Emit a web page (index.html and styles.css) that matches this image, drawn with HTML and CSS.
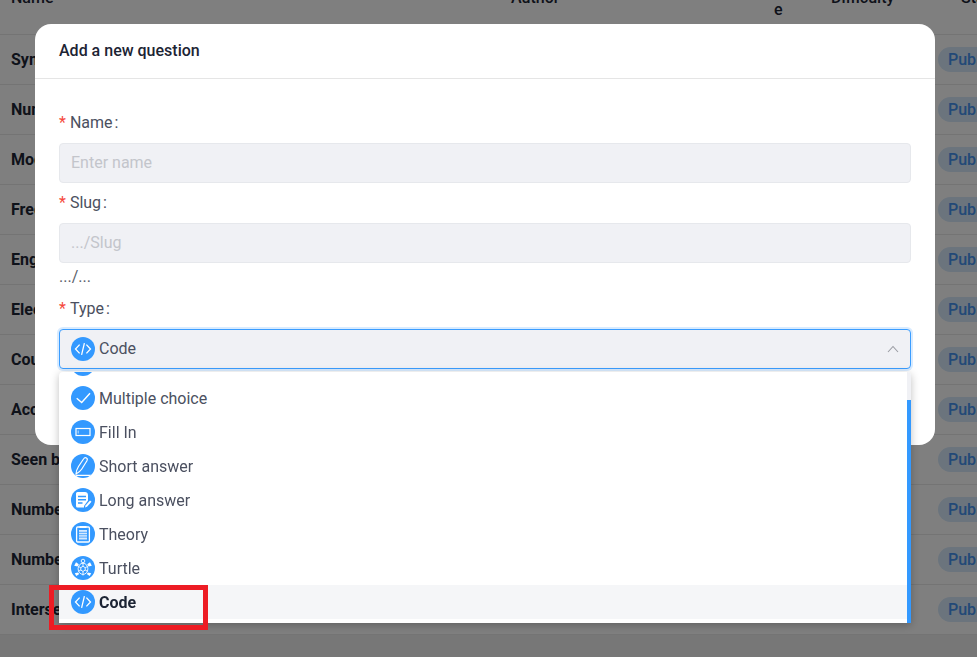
FILE: index.html
```html
<!DOCTYPE html>
<html lang="en">
<head>
<meta charset="utf-8">
<title>Add a new question</title>
<link rel="stylesheet" href="styles.css">
</head>
<body>
<svg class="defs" width="0" height="0" aria-hidden="true">
  <defs>
    <symbol id="i-code" viewBox="0 0 24 24">
      <path d="M8.600 7.600 4.500 12l4.100 4.400M15.400 7.600 19.500 12l-4.100 4.400M13.400 6.200l-2.800 11.600" fill="none" stroke="#fff" stroke-width="1.300"/>
    </symbol>
    <symbol id="i-check" viewBox="0 0 24 24">
      <path d="M5.700 12.300l5 4.200L19 7.300" fill="none" stroke="#fff" stroke-width="1.400"/>
    </symbol>
    <symbol id="i-fill" viewBox="0 0 24 24">
      <rect x="5" y="8.500" width="14" height="7" fill="none" stroke="#fff" stroke-width="1.200"/>
      <path d="M7.200 10.500v3" stroke="#fff" stroke-opacity=".7" stroke-width="1"/>
    </symbol>
    <symbol id="i-short" viewBox="0 0 24 24">
      <path d="M5 20c0-3 1-5 2.500-7.500L12.500 5c.8-1.300 2-1.600 3-1 1 .6 1 1.800.3 3l-5 8c-1.500 2.300-3.300 3.800-5.800 5zM5 21.300h15.500" fill="none" stroke="#fff" stroke-width="1.200"/>
    </symbol>
    <symbol id="i-long" viewBox="0 0 24 24">
      <path d="M6.500 4H14c1.700 0 3 1.300 3 3v5.500L13 18v1.500H6.500A1.500 1.500 0 0 1 5 18V5.500A1.500 1.500 0 0 1 6.500 4z" fill="#fff"/>
      <path d="M7 8.500h8M7 11.800h8M7 15h4.500" stroke="#3399ff" stroke-width="1.400"/>
      <path d="M14.500 17.500l4.500-5 1.500 1.200-4.500 5-2 .7z" fill="#fff"/>
    </symbol>
    <symbol id="i-theory" viewBox="0 0 24 24">
      <rect x="5.600" y="5" width="12.800" height="15" rx="1" fill="none" stroke="#fff" stroke-width="1.300"/>
      <path d="M8.500 4h7v2h-7z" fill="#fff"/>
      <path d="M8 8h8v9.500H8z" fill="#d5e9ff"/>
      <path d="M8 10.300h8M8 12.700h8M8 15.100h8" stroke="#3399ff" stroke-width=".8"/>
    </symbol>
    <symbol id="i-turtle" viewBox="0 0 24 24">
      <g fill="none" stroke="#fff" stroke-width=".9">
        <circle cx="12" cy="5" r="1.800"/>
        <ellipse cx="12" cy="12.800" rx="4.900" ry="5.600"/>
        <path d="M12 10.300l2.200 1.300v2.500L12 15.400l-2.200-1.300v-2.500zM12 7.200v3.100M12 15.400v3M7.400 10.500l2.400 1.100M16.600 10.500l-2.400 1.100M7.400 15.200l2.400-1.100M16.600 15.200l-2.400-1.100"/>
      </g>
      <path d="M7.800 8.300 5 6.300 3.200 9.800l3.300 .7zM16.200 8.300 19 6.300l1.800 3.500-3.300 .7zM7 16.500l-3.200 .7 1.500 2.800 3-2zM17 16.500l3.200 .7-1.500 2.800-3-2zM11.400 18.200h1.200l-.6 2z" fill="#fff"/>
    </symbol>
    <symbol id="i-blank" viewBox="0 0 24 24"></symbol>
  </defs>
</svg>

<main class="table">
  <div class="row head"><span class="head-cell">Name</span><span class="head-cell">Author</span><span class="type-col">Type</span><span class="head-cell">Difficulty</span><span class="head-cell status-col">Status</span></div>
  <div class="row"><span>Symmetric</span><span></span><span></span><span></span><span class="pill">Published</span></div>
  <div class="row"><span>Number</span><span></span><span></span><span></span><span class="pill">Published</span></div>
  <div class="row"><span>Mode</span><span></span><span></span><span></span><span class="pill">Published</span></div>
  <div class="row"><span>Frequency</span><span></span><span></span><span></span><span class="pill">Published</span></div>
  <div class="row"><span>English</span><span></span><span></span><span></span><span class="pill">Published</span></div>
  <div class="row"><span>Electric</span><span></span><span></span><span></span><span class="pill">Published</span></div>
  <div class="row"><span>Count</span><span></span><span></span><span></span><span class="pill">Published</span></div>
  <div class="row"><span>Access</span><span></span><span></span><span></span><span class="pill">Published</span></div>
  <div class="row"><span>Seen before</span><span></span><span></span><span></span><span class="pill">Published</span></div>
  <div class="row"><span>Number of</span><span></span><span></span><span></span><span class="pill">Published</span></div>
  <div class="row"><span>Number of</span><span></span><span></span><span></span><span class="pill">Published</span></div>
  <div class="row"><span>Intersection</span><span></span><span></span><span></span><span class="pill">Published</span></div>
</main>

<div class="overlay">
  <section class="modal">
    <h2 class="modal-title">Add a new question</h2>
    <form class="modal-body">
      <label class="field-label"><span class="req">*</span>Name<span class="colon">:</span></label>
      <div class="input placeholder">Enter name</div>
      <label class="field-label"><span class="req">*</span>Slug<span class="colon">:</span></label>
      <div class="input placeholder">.../Slug</div>
      <div class="slug-hint">.../...</div>
      <label class="field-label type-label"><span class="req">*</span>Type<span class="colon">:</span></label>
      <div class="select">
        <svg class="ico"><use href="#i-code"/></svg>
        <span class="select-value">Code</span>
        <svg class="chevron" viewBox="0 0 12 8"><path d="M1 7l5-5.500L11 7" fill="none" stroke="#9a9ca3" stroke-width="1.100"/></svg>
      </div>
      <div class="dropdown">
        <div class="options">
          <div class="option"><svg class="ico"><use href="#i-blank"/></svg>True or false</div>
          <div class="option"><svg class="ico"><use href="#i-check"/></svg>Multiple choice</div>
          <div class="option"><svg class="ico"><use href="#i-fill"/></svg>Fill In</div>
          <div class="option"><svg class="ico"><use href="#i-short"/></svg>Short answer</div>
          <div class="option"><svg class="ico"><use href="#i-long"/></svg>Long answer</div>
          <div class="option"><svg class="ico"><use href="#i-theory"/></svg>Theory</div>
          <div class="option"><svg class="ico"><use href="#i-turtle"/></svg>Turtle</div>
          <div class="option active"><svg class="ico"><use href="#i-code"/></svg>Code</div>
        </div>
        <div class="scroll-track"><div class="scroll-thumb"></div></div>
      </div>
      <div class="highlight"></div>
    </form>
  </section>
</div>
</body>
</html>
```
FILE: styles.css
```css
* { box-sizing: border-box; }

html, body {
  margin: 0;
  height: 657px;
  overflow: hidden;
}

body {
  background: #eeeeee;
  font-family: Roboto, "Liberation Sans", sans-serif;
  font-size: 16px;
  color: #1c2434;
}

.defs { position: absolute; }

.table {
  margin-top: -36px;
  background: #ffffff;
}

.row {
  display: grid;
  grid-template-columns: 500px 263px 57px 107px 1fr;
  align-items: center;
  height: 50px;
  padding-left: 11px;
  border-bottom: 1px solid #e9e9e9;
  font-weight: 700;
  white-space: nowrap;
}

.row.head {
  height: 71px;
  font-weight: 500;
}

.head-cell { margin-bottom: 4px; }

.type-col {
  width: 28px;
  white-space: normal;
  word-break: break-all;
  line-height: 22px;
}

.status-col { padding-left: 23px; }

.pill {
  width: 100px;
  height: 25px;
  padding-left: 10px;
  border-radius: 13px;
  background: #d6e8fb;
  color: #4593ee;
  font-weight: 500;
  line-height: 25px;
}

.overlay {
  position: fixed;
  inset: 0;
  background: rgba(0, 0, 0, 0.5);
}

.modal {
  position: relative;
  width: 900px;
  height: 421px;
  margin: 24px 0 0 35px;
  border-radius: 16px;
  background: #ffffff;
}

.modal-title {
  height: 55px;
  margin: 0;
  padding-left: 24px;
  border-bottom: 1px solid #e5e5e5;
  font-size: 16px;
  font-weight: 500;
  line-height: 53px;
}

.modal-body {
  display: flex;
  flex-direction: column;
  padding: 31px 24px 0;
}

.field-label {
  height: 24px;
  margin-bottom: 9px;
  padding-top: 1px;
  color: #4b5060;
  line-height: 24px;
}

.field-label + .input + .field-label { margin-top: 7px; }

.type-label { margin-top: 7px; }

.req {
  margin-right: 4px;
  color: #f5483b;
}

.colon { margin-left: 2px; margin-right: 4px; }

.input {
  height: 40px;
  padding: 0 11px;
  border: 1px solid #e6e8ec;
  border-radius: 4px;
  background: #f0f1f5;
  line-height: 38px;
}

.placeholder { color: #c3c5cb; }

.slug-hint {
  height: 24px;
  margin-top: 2px;
  color: #5a5e6a;
  line-height: 24px;
}

.select {
  display: flex;
  align-items: center;
  height: 40px;
  padding: 0 11px;
  border: 1px solid #3b9dff;
  border-radius: 4px;
  background: #f0f1f5;
  box-shadow: 0 0 0 2px #d8ebff;
  color: #4b5060;
}

.select-value {
  flex: 1;
  margin-bottom: 1px;
}

.ico {
  flex: none;
  width: 24px;
  height: 24px;
  margin-right: 4px;
  border-radius: 50%;
  background: #3399ff;
}

.chevron {
  width: 12px;
  height: 8px;
}

.dropdown {
  position: absolute;
  top: 348px;
  left: 24px;
  display: flex;
  width: 852px;
  height: 251px;
  overflow: hidden;
  border-radius: 4px 4px 0 0;
  background: #ffffff;
  box-shadow: 0 2px 8px rgba(0, 0, 0, 0.25);
}

.options {
  flex: 1;
  height: 255px;
  margin-top: -25px;
}

.option {
  display: flex;
  align-items: center;
  height: 34px;
  padding-left: 12px;
  color: #4b5060;
}

.option.active {
  background: #f5f6f8;
  color: #1c2434;
  font-weight: 700;
}

.scroll-track {
  flex: none;
  width: 4px;
  padding-top: 28px;
  background: #f0f1f5;
}

.scroll-thumb {
  height: 100%;
  background: #3399ff;
}

.highlight {
  position: absolute;
  top: 561px;
  left: 14px;
  width: 159px;
  height: 45px;
  border: 5px solid #ed1c24;
}
```
